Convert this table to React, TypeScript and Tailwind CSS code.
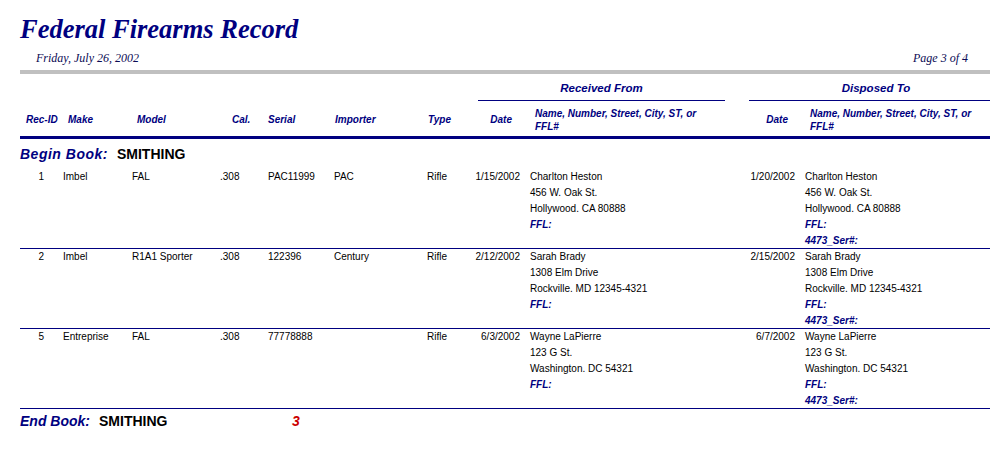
const rows = [
  {
    id: '1',
    make: 'Imbel',
    model: 'FAL',
    cal: '.308',
    serial: 'PAC11999',
    importer: 'PAC',
    type: 'Rifle',
    recDate: '1/15/2002',
    recAddr: ['Charlton Heston', '456 W. Oak St.', 'Hollywood. CA 80888'],
    dispDate: '1/20/2002',
    dispAddr: ['Charlton Heston', '456 W. Oak St.', 'Hollywood. CA 80888'],
  },
  {
    id: '2',
    make: 'Imbel',
    model: 'R1A1 Sporter',
    cal: '.308',
    serial: '122396',
    importer: 'Century',
    type: 'Rifle',
    recDate: '2/12/2002',
    recAddr: ['Sarah Brady', '1308 Elm Drive', 'Rockville. MD 12345-4321'],
    dispDate: '2/15/2002',
    dispAddr: ['Sarah Brady', '1308 Elm Drive', 'Rockville. MD 12345-4321'],
  },
  {
    id: '5',
    make: 'Entreprise',
    model: 'FAL',
    cal: '.308',
    serial: '77778888',
    importer: '',
    type: 'Rifle',
    recDate: '6/3/2002',
    recAddr: ['Wayne LaPierre', '123 G St.', 'Washington. DC 54321'],
    dispDate: '6/7/2002',
    dispAddr: ['Wayne LaPierre', '123 G St.', 'Washington. DC 54321'],
  },
];

const cols = 'grid grid-cols-[43px_69px_88px_48px_66px_93px_33px_60px_215px_60px_1fr]';

function App() {
  return (
    <div className="w-[990px] h-[451px] overflow-hidden bg-white pl-[20px] font-['Liberation_Sans',Arial,sans-serif]">
      {/* report title */}
      <div className="pt-[16px] pr-[22px]">
        <h1 className="font-['Liberation_Serif','Times_New_Roman',serif] text-[26.5px] leading-[27px] font-bold italic text-[#000080]">
          Federal Firearms Record
        </h1>
        <div className="flex justify-between pl-[16px] mt-[8px] font-['Liberation_Serif','Times_New_Roman',serif] italic text-[12px] leading-[14px] text-[#0b0b55]">
          <span>Friday, July 26, 2002</span>
          <span>Page 3 of 4</span>
        </div>
      </div>
      <div className="mt-[5px] h-[4px] bg-[#c0c0c0]"></div>

      {/* column headings */}
      <div className="text-[#000080] font-bold italic">
        <div className={`${cols} pt-[7px]`}>
          <div className="col-start-8 col-span-2 ml-[18px] mr-[10px] border-b border-[#000080] pb-[5px] text-center text-[11.5px] leading-[14px]">
            Received From
          </div>
          <div className="col-start-10 col-span-2 ml-[14px] border-b border-[#000080] pb-[5px] pl-[13px] text-center text-[11.5px] leading-[14px]">
            Disposed To
          </div>
        </div>
        <div className={`${cols} h-[35px] items-center pt-[2px] text-[10px] leading-[13px]`}>
          <div className="pl-[6px]">Rec-ID</div>
          <div className="pl-[5px]">Make</div>
          <div className="pl-[5px]">Model</div>
          <div className="pl-[12px]">Cal.</div>
          <div>Serial</div>
          <div className="pl-[1px]">Importer</div>
          <div className="pl-[1px]">Type</div>
          <div className="text-right pr-[8px]">Date</div>
          <div className="pl-[15px] pr-[20px]">Name, Number, Street, City, ST, or FFL#</div>
          <div className="text-right pr-[7px]">Date</div>
          <div className="pl-[15px] pr-[8px]">Name, Number, Street, City, ST, or FFL#</div>
        </div>
      </div>
      <div className="h-[3px] bg-[#000080]"></div>

      {/* group header */}
      <div className="h-[30px] flex items-center text-[14px] font-bold">
        <span className="italic text-[#000080] tracking-[0.5px]">Begin Book:</span>
        <span className="ml-[9px] text-black">SMITHING</span>
      </div>

      {rows.map((r) => (
        <div key={r.id} className={`${cols} h-[80px] border-b border-[#000080] text-[10px] leading-[16px] text-black`}>
          <div className="text-right pr-[19px]">{r.id}</div>
          <div>{r.make}</div>
          <div>{r.model}</div>
          <div>{r.cal}</div>
          <div>{r.serial}</div>
          <div>{r.importer}</div>
          <div>{r.type}</div>
          <div className="text-right">{r.recDate}</div>
          <div className="pl-[10px]">
            {r.recAddr.map((l) => (
              <div key={l}>{l}</div>
            ))}
            <div className="font-bold italic text-[#000080]">FFL:</div>
          </div>
          <div className="text-right">{r.dispDate}</div>
          <div className="pl-[10px]">
            {r.dispAddr.map((l) => (
              <div key={l}>{l}</div>
            ))}
            <div className="font-bold italic text-[#000080]">FFL:</div>
            <div className="font-bold italic text-[#000080]">4473_Ser#:</div>
          </div>
        </div>
      ))}

      {/* group footer */}
      <div className="h-[24px] flex items-center text-[14px] font-bold">
        <span className="italic text-[#000080]">End Book:</span>
        <span className="ml-[9px] text-black w-[193px]">SMITHING</span>
        <span className="italic text-[#cc0000]">3</span>
      </div>
    </div>
  );
}

export default App;
